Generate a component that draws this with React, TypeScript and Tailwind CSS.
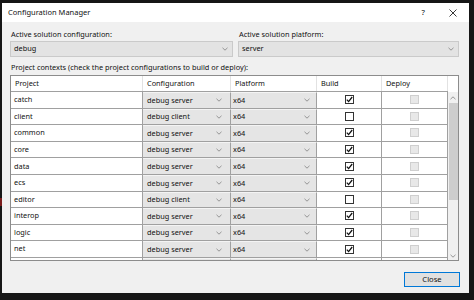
import React from "react";

const rows: [string, string, boolean][] = [
  ["catch", "debug server", true],
  ["client", "debug client", false],
  ["common", "debug server", true],
  ["core", "debug server", true],
  ["data", "debug server", true],
  ["ecs", "debug server", true],
  ["editor", "debug client", false],
  ["interop", "debug server", true],
  ["logic", "debug server", true],
  ["net", "debug server", true],
];

function Chevron({ className = "" }: { className?: string }) {
  return (
    <svg width="6" height="4" viewBox="0 0 6 4" className={className}>
      <polyline points="0.5,0.8 3,3.2 5.5,0.8" fill="none" stroke="#8a8a8a" strokeWidth="0.9" />
    </svg>
  );
}

function Check({ checked }: { checked: boolean }) {
  return (
    <div className="w-[9px] h-[9px] border border-[#333] bg-white flex items-center justify-center">
      {checked && (
        <svg width="7" height="7" viewBox="0 0 7 7">
          <polyline points="0.8,3.6 2.6,5.6 6.2,1" fill="none" stroke="#111" strokeWidth="1.3" />
        </svg>
      )}
    </div>
  );
}

function Disabled() {
  return <div className="w-[9px] h-[9px] border border-[#cfcfcf] bg-[#e8e8e8]" />;
}

const gridCols = "grid grid-cols-[132px_88px_86px_65px_66px]";

export default function App() {
  return (
    <div
      className="w-[474px] h-[300px] bg-[#161616] flex flex-col overflow-hidden text-[#111]"
      style={{ fontFamily: '"Noto Sans", "Open Sans", sans-serif' }}
    >
      <div className="h-[3px] shrink-0" />
      <div className="flex flex-1 min-h-0">
        <div className="w-[2px] flex flex-col">
          <div className="h-[195px]" />
          <div className="h-[8px] bg-[#7a1c1c]" />
        </div>
        <div className="w-[467px] h-[290px] flex flex-col bg-[#f0f0f0] text-[7.35px] leading-none">
          {/* title bar */}
          <div className="h-[19px] bg-white flex items-center pl-[6px] pr-[12px]">
            <span className="text-[7.5px]">Configuration Manager</span>
            <span className="ml-auto mr-[24px] text-[7.8px]">?</span>
            <svg width="8" height="8" viewBox="0 0 8 8">
              <line x1="0.5" y1="0.5" x2="7.5" y2="7.5" stroke="#222" strokeWidth="0.9" />
              <line x1="7.5" y1="0.5" x2="0.5" y2="7.5" stroke="#222" strokeWidth="0.9" />
            </svg>
          </div>
          {/* body */}
          <div className="flex flex-col pl-[8px] pr-[8px]">
            <div className="flex gap-[5px] mt-[8px]">
              <div className="w-[223px] flex flex-col">
                <div className="h-[10px] pl-[1px] flex items-center">Active solution configuration:</div>
                <div className="mt-[1px] h-[16px] bg-[#e3e3e3] border border-[#cacaca] flex items-center pl-[3px] pr-[4px]">
                  <span>debug</span>
                  <Chevron className="ml-auto" />
                </div>
              </div>
              <div className="w-[221px] flex flex-col">
                <div className="h-[10px] pl-[1px] flex items-center">Active solution platform:</div>
                <div className="mt-[1px] h-[16px] bg-[#e3e3e3] border border-[#cacaca] flex items-center pl-[3px] pr-[4px]">
                  <span>server</span>
                  <Chevron className="ml-auto" />
                </div>
              </div>
            </div>
            <div className="h-[10px] mt-[6px] pl-[1px] flex items-center">
              Project contexts (check the project configurations to build or deploy):
            </div>
            {/* table */}
            <div className="mt-[2px] w-[449px] h-[186px] border border-[#8c8c8c] bg-white flex overflow-hidden">
              <div className="w-[437px] flex flex-col">
                <div className={`${gridCols} h-[16px] shrink-0 border-b border-[#a0a0a0] bg-white`}>
                  {["Project", "Configuration", "Platform", "Build", "Deploy"].map((h) => (
                    <div key={h} className="border-r border-[#e2e2e2] flex items-center pl-[4px]">
                      {h}
                    </div>
                  ))}
                </div>
                {[...rows, ["", "", false] as [string, string, boolean]].map(([name, cfg, b], i) => (
                  <div key={i} className={`${gridCols} h-[16.6px] shrink-0 border-b border-[#a0a0a0]`}>
                    <div className="border-r border-[#a0a0a0] bg-white flex items-center pl-[3px]">{name}</div>
                    <div className="border-r border-[#a0a0a0] bg-[#e5e5e5] border-t border-t-[#f4f4f4] flex items-center pl-[4px] pr-[8px]">
                      <span>{cfg}</span>
                      {name && <Chevron className="ml-auto" />}
                    </div>
                    <div className="border-r border-[#a0a0a0] bg-[#e5e5e5] border-t border-t-[#f4f4f4] flex items-center pl-[2px] pr-[6px]">
                      <span>{name ? "x64" : ""}</span>
                      {name && <Chevron className="ml-auto" />}
                    </div>
                    <div className="border-r border-[#a0a0a0] bg-white flex items-center justify-center">
                      {name && <Check checked={b} />}
                    </div>
                    <div className="border-r border-[#a0a0a0] bg-white flex items-center justify-center">
                      {name && <Disabled />}
                    </div>
                  </div>
                ))}
              </div>
              {/* scrollbar */}
              <div className="w-[10px] flex flex-col">
                <div className="h-[16px] shrink-0 bg-white" />
                <div className="flex-1 bg-[#f0f0f0] flex flex-col items-center">
                  <div className="h-[11px] flex items-center justify-center">
                    <Chevron className="rotate-180" />
                  </div>
                  <div className="w-[9px] h-[97px] bg-[#cdcdcd]" />
                  <div className="flex-1" />
                  <div className="h-[9px] flex items-center justify-center">
                    <Chevron />
                  </div>
                </div>
              </div>
            </div>
            <div className="flex justify-end mt-[11px] pr-[1px]">
              <div className="w-[56px] h-[15px] bg-[#e1e1e1] border border-[#0078d7] flex items-center justify-center text-[7.6px]">
                Close
              </div>
            </div>
          </div>
        </div>
      </div>
    </div>
  );
}
